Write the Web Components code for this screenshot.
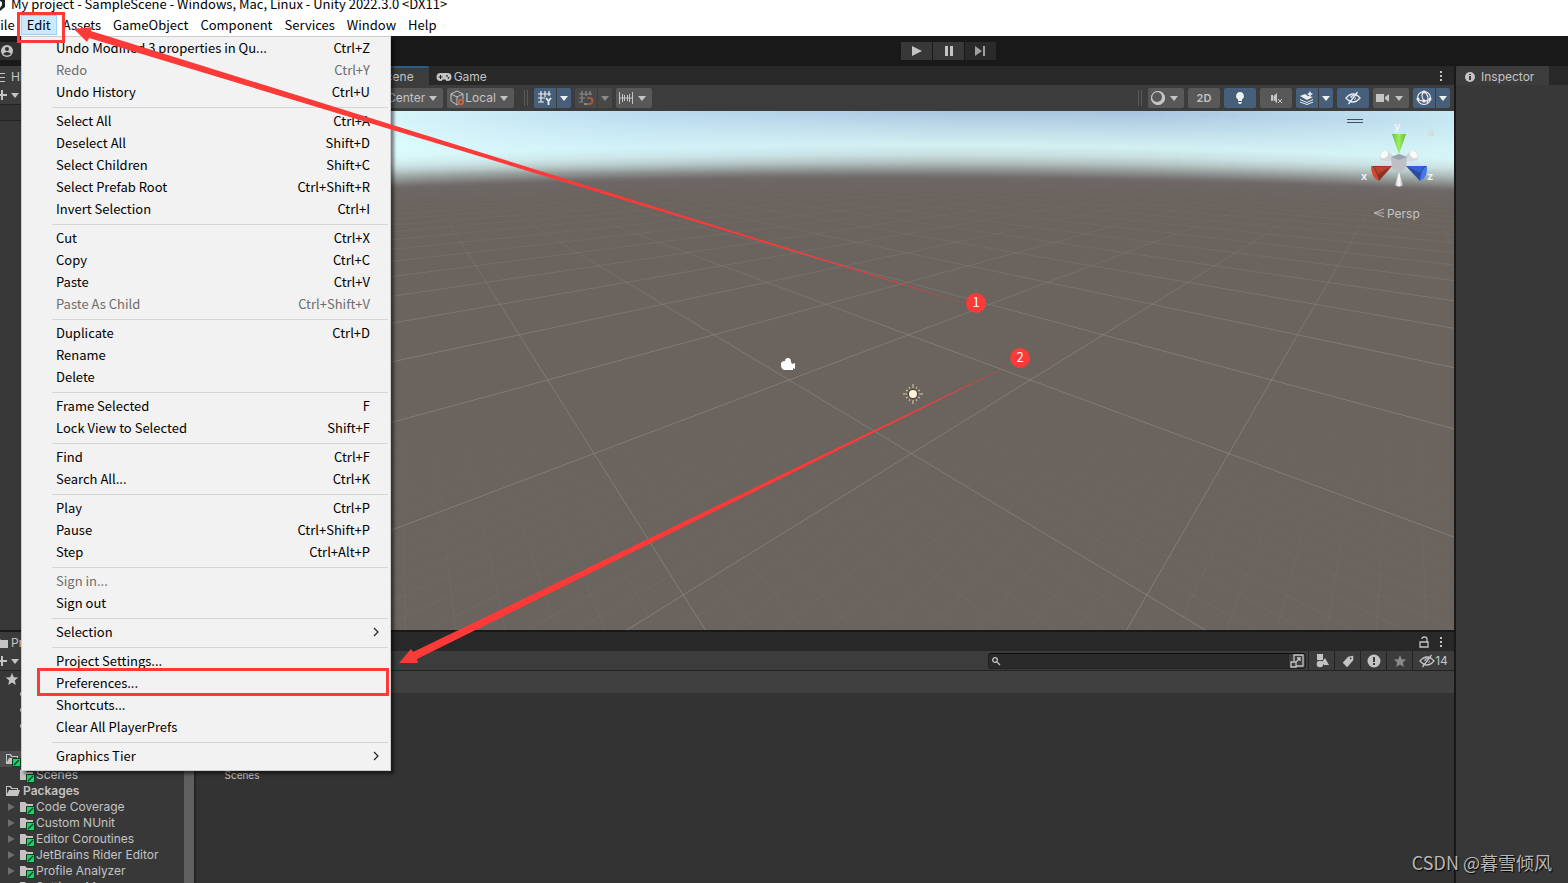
<!DOCTYPE html>
<html lang="en">
<head>
<meta charset="utf-8">
<title>My project - SampleScene</title>
<style>
    body {
        margin: 0;
        height: 100vh;
        overflow: hidden;
        background: #191919;
    }
</style>
</head>
<body>
<editor-window></editor-window>

<script>
const ICONS = {
    caret: '<path d="M4 6h8l-4 5z"/>',
    right: '<path d="M4 3l9 5-9 5z"/>',
    play: '<path d="M4 3l10 5-10 5z"/>',
    pause: '<path d="M5 3h3v10H5zM10 3h3v10h-3z"/>',
    step: '<path d="M3 3l7 5-7 5zM11 3h2v10h-2z"/>',
    user: '<circle cx="7" cy="8" r="6"/><g fill="#303030"><circle cx="7" cy="6" r="2"/><path d="M3 11q4-4 8 0-4 3-8 0z"/></g>',
    list: '<path d="M1 4h11v1H1zM1 8h11v1H1zM1 12h11v1H1z"/>',
    plus: '<path d="M7 3h2v4h4v2H9v4H7V9H3V7h4z"/>',
    kebab: '<path d="M7 3h2v2H7zM7 7h2v2H7zM7 11h2v2H7z"/>',
    lock: '<path d="M4 8h8v5H4zM6 8M6 5q0-2 2.500-2T11 5v3" fill="none" stroke="currentColor" stroke-width="1.300"/>',
    folder: '<path d="M1 3h5l2 2h7v8H1z"/>',
    open: '<path d="M1 13V3h5l1 2h6v2h2l-2 6zM2 11l2-4h8V6H6L5 4H2z" fill-rule="evenodd"/>',
    badge: '<path d="M0 3h5l2 2h6v8H0z"/><rect x="6" y="7" width="9" height="9" rx="1" fill="#0e3b22"/><rect x="7" y="8" width="7" height="7" fill="#17d36b"/><path d="M8 14l5-5" stroke="#0e3b22" stroke-width="1.300"/>',
    openbadge: '<path d="M1 13V3h5l1 2h6v2h2l-2 6zM2 11l2-4h8V6H6L5 4H2z" fill-rule="evenodd"/><rect x="7" y="7" width="9" height="9" rx="1" fill="#0e3b22"/><rect x="8" y="8" width="7" height="7" fill="#17d36b"/><path d="M9 14l5-5" stroke="#0e3b22" stroke-width="1.300"/>',
    star: '<path d="M8 2l1.800 4.200 4.400.4-3.400 3 1 4.400L8 11.600 4.200 14l1-4.400-3.400-3 4.400-.4z"/>',
    search: '<g fill="none" stroke="currentColor" stroke-width="1.300"><circle cx="6" cy="7" r="2.300"/><path d="M8 9l3 3"/></g>',
    game: '<path d="M4.500 4h7a4 4 0 0 1 0 8q-1.500 0-2.200-1.500H6.700Q6 12 4.500 12a4 4 0 0 1 0-8z"/><g fill="#282828"><path d="M4 6h1v1.500h1.500v1H5V10H4V8.500H2.500v-1H4z"/><circle cx="11" cy="6.800" r=".9"/><circle cx="12.500" cy="8.800" r=".9"/></g>',
    hash: '<path d="M5 2v12M11 2v12M2 5h12M2 11h12" fill="none" stroke="currentColor"/>',
    info: '<circle cx="7" cy="8" r="5"/><path d="M6 5h2v1H6zM6 7h2v4H6z" fill="#3c3c3c"/>',
    cube: '<g fill="none" stroke="currentColor"><path d="M8 1l6 3v7l-6 4-6-4V4zM2 4l6 3 6-3M8 7v8"/></g><circle cx="12" cy="12" r="3.500" fill="#585858"/><circle cx="12" cy="12" r="2.300" fill="none" stroke="#e8663c" stroke-width="1.400"/>',
    gridy: '<path d="M4 1v11M8 1v6M12 1v5M1 4h13M1 8h7M1 12h6" stroke="currentColor" fill="none" stroke-width="1.200"/><path d="M9 8l2.500 3v4M14 8l-2.500 3" stroke="currentColor" fill="none" stroke-width="1.800"/>',
    snap: '<path d="M4 1v11M8 1v5M12 1v4M1 4h13M1 8h6M1 12h4" stroke="currentColor" fill="none" stroke-width="1.200"/><path d="M9 8h2.500a3 3 0 0 1 0 6H9" stroke="#a8573f" fill="none" stroke-width="2"/><path d="M6 13h3v2H6z"/>',
    ruler: '<path d="M1.500 2v12M14.500 2v12M4.500 4v8M6.500 5v6M9.500 5v6M11.500 4v8M1 8h14" stroke="currentColor" fill="none"/>',
    shade: '<circle cx="8" cy="8" r="7"/><circle cx="7" cy="7" r="5" fill="#585858"/><circle cx="8" cy="8" r="6.500" fill="none" stroke="currentColor"/>',
    bulb: '<path d="M8 2a4 4 0 0 1 2 7.400V11H6V9.400A4 4 0 0 1 8 2zM6 12h4l-1 2H7z"/>',
    mute: '<path d="M3 5h2v6H3zM5.500 6L9 3v10l-3.500-3z"/><path d="M10 9l4 4M14 9l-4 4" stroke="currentColor"/>',
    fx: '<path d="M1 6l5-2 3 2 5 1-6 3zM1 9l7 3 6-3v1l-6 3-7-3zM11 1l1 2 2 1-2 1-1 2-1-2-2-1 2-1z"/><path d="M1 12l7 2.500 6-2.500" fill="none" stroke="currentColor"/>',
    eye: '<g fill="none" stroke="currentColor" stroke-width="1.300"><path d="M1 8q7-8 14 0-7 8-14 0z"/><path d="M12.500 2l-9 12"/><path d="M6 8a2 2 0 0 1 3-2"/></g><path d="M9 10a2 2 0 0 0 1.500-3z"/>',
    camera: '<path d="M1 4h8v8H1zM10 7l4-3v8l-4-3z"/>',
    sphere: '<g fill="none" stroke="currentColor" stroke-width="1.200"><circle cx="8" cy="8" r="6.500"/><path d="M8 1q-4 4 0 10M8 1q6 5 3 12M1 9q6 4 14 0"/></g><circle cx="8" cy="2" r="1.500"/><circle cx="2" cy="9" r="1.500"/><circle cx="8" cy="11" r="1.700"/><circle cx="14" cy="9" r="1.500"/>',
    jump: '<g fill="none" stroke="currentColor" stroke-width="1.300"><path d="M5 8V2h9v11H7M2 9h5v5H2zM7 9l4-4M8 5h3v3"/></g>',
    types: '<circle cx="6" cy="11" r="3.300"/><path d="M3 1h6v6H3zM11 5l4 7h-5L8 9z"/>',
    tag: '<path d="M8 3l6-1v5l-7 8-5-5zM11 4a1 1 0 1 0 .1 0z" fill-rule="evenodd"/>',
    alert: '<circle cx="8" cy="8" r="6.500"/><path d="M7 4h2v5H7zM7 10h2v2H7z" fill="#3c3c3c"/>'
};

function setup(el, css, html) {
    const shadow = el.attachShadow({mode: 'open'});
    shadow.innerHTML = `<style>:host{box-sizing:border-box} *{box-sizing:border-box}${css}</style>${html}`;
    return shadow;
}

class UiIcon extends HTMLElement {
    constructor() {
        super();
        setup(this, `
            :host{display:inline-block; width:16px; height:16px; flex:none;}
            :host([size="small"]){width:12px; height:12px;}
            :host([size="mid"]){width:14px; height:14px;}
            svg{display:block; width:100%; height:100%;}
        `, '');
    }
    connectedCallback() {
        const box = document.createElement('div');
        box.style.display = 'contents';
        box.innerHTML = `<svg viewBox="0 0 16 16" fill="currentColor" aria-hidden="true">${ICONS[this.getAttribute('name')]}</svg>`;
        this.shadowRoot.append(box);
    }
}
customElements.define('ui-icon', UiIcon);

class TitleBar extends HTMLElement {
    constructor() {
        super();
        setup(this, `
            :host{display:flex; height:15px; align-items:flex-end; overflow:hidden; background:#fff; color:#000;}
            svg{width:8px; height:20px; flex:none;}
            span{font:13px/22px "Noto Sans CJK SC", sans-serif; margin-left:3px; white-space:pre;}
        `, `
            <svg viewBox="0 0 8 20"><path d="M0 4l5-1v9l-5 4v-3l2-3V7L0 6z" fill="#222"/></svg>
            <span><slot></slot></span>
        `);
    }
}
customElements.define('title-bar', TitleBar);

class MenuBar extends HTMLElement {
    constructor() {
        super();
        const items = ['File', 'Edit', 'Assets', 'GameObject', 'Component', 'Services', 'Window', 'Help'];
        setup(this, `
            :host{display:block; background:#fff; height:21px; overflow:hidden;}
            nav{display:flex; margin-left:-13px;}
            button{font:13px/18px "Noto Sans CJK SC", sans-serif; color:#000; border:1px solid transparent; background:none; padding:0 5px; height:20px;}
            button.open{background:#cce8ff; border-color:#99d1ff;}
        `, `<nav>${items.map(t => `<button class="${t == 'Edit' ? 'open' : ''}">${t}</button>`).join('')}</nav>`);
    }
}
customElements.define('menu-bar', MenuBar);

class EditMenu extends HTMLElement {
    constructor() {
        super();
        // a leading "-" marks a disabled entry, ">" as shortcut opens a submenu
        const groups = [
            [['Undo Modified 3 properties in Qu...', 'Ctrl+Z'], ['-Redo', 'Ctrl+Y'], ['Undo History', 'Ctrl+U']],
            [['Select All', 'Ctrl+A'], ['Deselect All', 'Shift+D'], ['Select Children', 'Shift+C'], ['Select Prefab Root', 'Ctrl+Shift+R'], ['Invert Selection', 'Ctrl+I']],
            [['Cut', 'Ctrl+X'], ['Copy', 'Ctrl+C'], ['Paste', 'Ctrl+V'], ['-Paste As Child', 'Ctrl+Shift+V']],
            [['Duplicate', 'Ctrl+D'], ['Rename', ''], ['Delete', '']],
            [['Frame Selected', 'F'], ['Lock View to Selected', 'Shift+F']],
            [['Find', 'Ctrl+F'], ['Search All...', 'Ctrl+K']],
            [['Play', 'Ctrl+P'], ['Pause', 'Ctrl+Shift+P'], ['Step', 'Ctrl+Alt+P']],
            [['-Sign in...', ''], ['Sign out', '']],
            [['Selection', '>']],
            [['Project Settings...', ''], ['Preferences...', ''], ['Shortcuts...', ''], ['Clear All PlayerPrefs', '']],
            [['Graphics Tier', '>']]
        ];
        const row = ([name, key]) => {
            const off = name[0] == '-';
            const right = key == '>'
                ? '<svg viewBox="0 0 6 10"><path d="M1 1l4 4-4 4" fill="none" stroke="#222" stroke-width="1.200"/></svg>'
                : `<span>${key}</span>`;
            return `<button role="menuitem" ${off ? 'disabled' : ''}><span>${off ? name.slice(1) : name}</span>${right}</button>`;
        };
        setup(this, `
            :host{display:block; width:370px; padding:1px 2px 2px; background:#f2f2f2; border:1px solid #ccc; box-shadow:3px 3px 3px rgba(0,0,0,.5);}
            button{display:flex; justify-content:space-between; align-items:center; width:100%; height:22px; border:0; padding:0 18px 2px 32px; background:none; font:13px/20px "Noto Sans CJK SC", sans-serif; color:#000; text-align:left;}
            button:disabled{color:#6d6d6d;}
            hr{border:0; border-top:1px solid #d5d5d5; margin:3px 0 3px 28px;}
            svg{width:6px; height:10px; margin-right:-9px;}
        `, groups.map(g => g.map(row).join('')).join('<hr>'));
    }
}
customElements.define('edit-menu', EditMenu);

class PlayBar extends HTMLElement {
    constructor() {
        super();
        setup(this, `
            :host{display:grid; grid-template-columns:1fr auto 1fr; align-items:center; height:30px; background:#191919; padding-right:1px;}
            div{display:flex; gap:1px; margin-left:329px;}
            button{display:flex; align-items:center; justify-content:center; width:31px; height:18px; border:0; padding:0; background:#383838; color:#c4c4c4;}
            .acc{width:40px; padding-left:0; justify-content:flex-start; background:#303030;}
            .dim{color:#a0a0a0; background:#2a2a2a;}
        `, `
            <button class="acc" aria-label="Account"><ui-icon name="user"></ui-icon></button>
            <div>
                <button aria-label="Play"><ui-icon name="play"></ui-icon></button>
                <button aria-label="Pause"><ui-icon name="pause"></ui-icon></button>
                <button class="dim" aria-label="Step"><ui-icon name="step"></ui-icon></button>
            </div>
        `);
    }
}
customElements.define('play-bar', PlayBar);

class DockPanel extends HTMLElement {
    constructor() {
        super();
        setup(this, `
            :host{display:flex; flex-direction:column; min-width:0; min-height:0; background:#383838; overflow:hidden;}
            .tabs{display:flex; height:19px; flex:none; background:#282828;}
            .end{margin-left:auto; display:flex; align-items:center; gap:1px; padding-right:5px;}
            .body{flex:1; min-height:0; display:flex; flex-direction:column;}
        `, `
            <div class="tabs"><slot name="tab"></slot><div class="end"><slot name="end"></slot></div></div>
            <slot name="tools"></slot>
            <div class="body"><slot></slot></div>
        `);
    }
}
customElements.define('dock-panel', DockPanel);

class DockTab extends HTMLElement {
    constructor() {
        super();
        const icon = this.getAttribute('icon');
        setup(this, `
            :host{display:flex;}
            button{display:flex; align-items:center; gap:2px; border:0; border-top:2px solid transparent; padding:0 15px 0 7px; background:none; color:#c4c4c4; font:12px/16px Inter, sans-serif;}
            :host([active]) button{background:#3c3c3c; border-radius:2px 2px 0 0;}
            :host([focused]) button{border-top-color:#2c5d87; padding-left:4px;}
            :host([edge]) button{padding-left:0; margin-left:-7px;}
        `, `<button><ui-icon name="${icon}"></ui-icon><slot></slot></button>`);
    }
}
customElements.define('dock-tab', DockTab);

class ToolButton extends HTMLElement {
    constructor() {
        super();
        setup(this, `
            :host{display:flex; gap:1px; flex:none;}
            button{display:flex; align-items:center; justify-content:center; height:20px; min-width:32px; border:0; border-radius:2px; padding:0 2px; background:#585858; color:#c4c4c4; font:12px/16px Inter, sans-serif;}
            :host([wide]) button{width:36px;}
            :host([on]) button{background:#46607c; color:#eee;}
            :host([off]) button{background:#484848; color:#8a8a8a;}
            .main{min-width:22px; width:22px; border-radius:2px 0 0 2px;}
            .more{min-width:14px; width:14px; border-radius:0 2px 2px 0; padding:0;}
        `, this.hasAttribute('split')
            ? `<button class="main" aria-label="Toggle"><slot></slot></button><button class="more" aria-label="Options"><ui-icon name="caret"></ui-icon></button>`
            : '<button><slot></slot></button>');
    }
}
customElements.define('tool-button', ToolButton);

class SceneToolbar extends HTMLElement {
    constructor() {
        super();
        setup(this, `
            :host{display:flex; flex:none; align-items:center; gap:4px; height:26px; padding:0 4px 0 13px; background:#3c3c3c;}
            i{width:4px; height:16px; border:solid #5a5a5a; border-width:0 1px; margin:0 2px 0 6px; flex:none;}
            .gap{flex:1;}
            b{font-weight:600; font-size:11px;}
        `, `
            <tool-button><ui-icon name="cube"></ui-icon>Center<ui-icon name="caret"></ui-icon></tool-button>
            <tool-button><ui-icon name="cube"></ui-icon>Local<ui-icon name="caret"></ui-icon></tool-button>
            <i></i>
            <tool-button split on><ui-icon name="gridy"></ui-icon></tool-button>
            <tool-button split off><ui-icon name="snap"></ui-icon></tool-button>
            <tool-button wide><ui-icon name="ruler"></ui-icon><ui-icon name="caret"></ui-icon></tool-button>
            <span class="gap"></span>
            <i></i>
            <tool-button wide><ui-icon name="shade"></ui-icon><ui-icon name="caret"></ui-icon></tool-button>
            <tool-button><b>2D</b></tool-button>
            <tool-button on><ui-icon name="bulb"></ui-icon></tool-button>
            <tool-button><ui-icon name="mute"></ui-icon></tool-button>
            <tool-button split on><ui-icon name="fx"></ui-icon></tool-button>
            <tool-button on><ui-icon name="eye"></ui-icon></tool-button>
            <tool-button wide><ui-icon name="camera"></ui-icon><ui-icon name="caret"></ui-icon></tool-button>
            <tool-button split on><ui-icon name="sphere"></ui-icon></tool-button>
        `);
    }
}
customElements.define('scene-toolbar', SceneToolbar);

// Ground grid seen along its diagonal: row n is the n-th line of crossings,
// k the sideways position in it.
function gridPath(n0, n1, step, reach) {
    const point = (n, k) => {
        const s = 1 / (0.002157 + 0.000994 * n);
        return (903.7 + (0.0245 + k) * s).toFixed(1) + ' ' + (146.7 + 0.967 * s).toFixed(1);
    };
    let d = '';
    for (let m = -reach; m <= reach; m += step) {
        d += `M${point(n0, (n0 - 1) / 2 + m)}L${point(n1, (n1 - 1) / 2 + m)}`;
        d += `M${point(n0, (1 - n0) / 2 + m)}L${point(n1, (1 - n1) / 2 + m)}`;
    }
    return d;
}

class SceneView extends HTMLElement {
    constructor() {
        super();
        let rays = '';
        for (let a = 0; a < 12; a++) {
            rays += `<path d="M0-6V-${a % 3 ? 8 : 10}" transform="rotate(${a * 30})"/>`;
        }
        setup(this, `
            :host{display:block; flex:1; min-height:0; background:#69625c;}
            svg{display:block; width:100%; height:100%;}
            text{font-family:Inter, sans-serif;}
        `, `
            <svg viewBox="356 111 1098 519" preserveAspectRatio="xMidYMin slice">
                <defs>
                    <radialGradient id="sky" gradientUnits="userSpaceOnUse" cx="890" cy="12177" r="12066">
                        <stop offset=".99300" stop-color="#6a635e"/>
                        <stop offset=".99440" stop-color="#6d6765"/>
                        <stop offset=".99465" stop-color="#757170"/>
                        <stop offset=".99520" stop-color="#929997"/>
                        <stop offset=".99580" stop-color="#b4c3c2"/>
                        <stop offset=".99640" stop-color="#c9dfe0"/>
                        <stop offset=".99718" stop-color="#d3f0f2"/>
                        <stop offset=".99834" stop-color="#c3dfea"/>
                        <stop offset="1" stop-color="#a9c6e1"/>
                    </radialGradient>
                    <linearGradient id="side">
                        <stop offset=".03" stop-color="#e0ffff" stop-opacity=".85"/>
                        <stop offset=".25" stop-color="#d0f4ff" stop-opacity=".5"/>
                        <stop offset=".55" stop-color="#d0f0ff" stop-opacity="0"/>
                        <stop offset=".7" stop-color="#d0f0ff" stop-opacity="0"/>
                        <stop offset="1" stop-color="#dcffff" stop-opacity=".6"/>
                    </linearGradient>
                    <linearGradient id="low" x2="0" y2="1">
                        <stop offset="0" stop-color="#fff"/>
                        <stop offset=".6" stop-color="#fff"/>
                        <stop offset="1" stop-color="#000"/>
                    </linearGradient>
                    <linearGradient id="fade" gradientUnits="userSpaceOnUse" x1="0" y1="175" x2="0" y2="350">
                        <stop offset="0" stop-color="#000"/>
                        <stop offset=".3" stop-color="#444"/>
                        <stop offset="1" stop-color="#fff"/>
                    </linearGradient>
                    <linearGradient id="near" gradientUnits="userSpaceOnUse" x1="0" y1="380" x2="0" y2="600">
                        <stop offset="0" stop-color="#000"/>
                        <stop offset="1" stop-color="#fff"/>
                    </linearGradient>
                    <mask id="mlow" maskUnits="userSpaceOnUse" x="356" y="111" width="1098" height="62"><rect x="356" y="111" width="1098" height="62" fill="url(#low)"/></mask>
                    <mask id="mfade" maskUnits="userSpaceOnUse" x="356" y="111" width="1098" height="900"><rect x="356" y="111" width="1098" height="900" fill="url(#fade)"/></mask>
                    <mask id="mnear" maskUnits="userSpaceOnUse" x="356" y="111" width="1098" height="900"><rect x="356" y="111" width="1098" height="900" fill="url(#near)"/></mask>
                    <linearGradient id="green"><stop offset="0" stop-color="#6cc03c"/><stop offset=".5" stop-color="#9cf060"/><stop offset="1" stop-color="#6cb040"/></linearGradient>
                    <linearGradient id="white"><stop offset="0" stop-color="#bbb"/><stop offset=".5" stop-color="#fff"/><stop offset="1" stop-color="#aaa"/></linearGradient>
                </defs>
                <rect x="356" y="111" width="1098" height="900" fill="url(#sky)"/>
                <rect x="356" y="111" width="1098" height="62" fill="url(#side)" mask="url(#mlow)"/>
                <g mask="url(#mfade)"><path d="${gridPath(-1.5, 26, 1, 40)}" stroke="#9a9c9a" stroke-opacity=".44" fill="none"/></g>
                <g mask="url(#mnear)"><path d="${gridPath(-1, 2.5, 0.1, 5)}" stroke="#8a8c8a" stroke-opacity=".16" fill="none"/></g>

                <path d="M781 364q0-3 4-3 0-3 3-3t3 4l1 2 3-1v6l-2-1v2h-9q-3-1-3-5z" fill="#fff"/>
                <g transform="translate(913 394)"><g stroke="#d8cfae" stroke-width="1">${rays}</g><circle r="5" fill="#4b463f"/><circle r="4" fill="#fff4d8"/></g>

                <path d="M1347 119.500h16M1347 122.500h16" stroke="#4a5050"/>
                <path d="M1392 134h14l-7 20z" fill="url(#green)"/>
                <path d="M1381 155q0-4 4-4 3 0 8 5l-1 5h-7l-5-1q0-3 1-5z" fill="#d4d8da"/><path d="M1381 155q1-4 4-4t3 3-4 4-3-3z" fill="#fafafa"/>
                <path d="M1417 155q0-4-4-4-3 0-8 5l1 5h7l5-1q0-3-1-5z" fill="#d4d8da"/><path d="M1417 155q-1-4-4-4t-3 3 4 4 3-3z" fill="#fafafa"/>
                <path d="M1391 157l8-3 8 3-1 11-7 5-7-5z" fill="#bcc0c4"/>
                <path d="M1391 157l8-3 8 3-8 3z" fill="#9ba4ae"/>
                <path d="M1399 172l4 13q-4 3-8 0z" fill="url(#white)"/>
                <path d="M1392 166h-20l7 15z" fill="#8c3222"/><path d="M1371 166q4 1 8 15-8-3-8-15z" fill="#d04a30"/><path d="M1374 167l18-1-14 8z" fill="#b84430"/>
                <path d="M1406 166h21l-7 15z" fill="#2c4aa0"/><path d="M1427 166q-6 2-7 15 8-3 7-15z" fill="#4678ec"/><path d="M1406 166h18l-4 7z" fill="#3860d0"/>
                <g fill="#f0f4f4" font-size="11" font-weight="600"><text x="1394" y="130">y</text><text x="1361" y="180">x</text><text x="1427" y="180">z</text></g>
                <path d="M1428 132h6v4h-6zM1429 132v-2h4v2" fill="#d8dcdc" stroke="none"/>
                <path d="M1384 209l-10 4 10 4M1374 213h10" stroke="#b8b8b8" fill="none"/>
                <text x="1387" y="218" font-size="12" fill="#c4c4c4">Persp</text>
            </svg>
        `);
    }
}
customElements.define('scene-view', SceneView);

class CreateBar extends HTMLElement {
    constructor() {
        super();
        setup(this, `
            :host{display:flex; align-items:center; flex:none; height:20px; background:#3c3c3c; border-bottom:1px solid #232323;}
            button{display:flex; align-items:center; border:0; padding:0; margin-left:-6px; background:none; color:#c4c4c4;}
            ui-icon + ui-icon{margin-left:-3px;}
            slot{display:contents;}
        `, '<button aria-label="Create"><ui-icon name="plus"></ui-icon><ui-icon name="caret"></ui-icon></button><slot></slot>');
    }
}
customElements.define('create-bar', CreateBar);

class ProjectSearch extends HTMLElement {
    constructor() {
        super();
        setup(this, `
            :host{display:flex; margin-left:auto; height:100%; align-items:center; color:#c4c4c4;}
            label{display:flex; align-items:center; width:318px; height:16px; background:#2a2a2a; border:1px solid #212121; border-top-color:#0d0d0d; border-radius:3px; margin-right:2px; overflow:hidden;}
            input{flex:1; min-width:0; border:0; padding:0; background:none; color:#d2d2d2; font:12px/14px Inter, sans-serif; outline:none;}
            button{display:flex; align-items:center; justify-content:center; width:26px; height:100%; border:0; border-left:1px solid #232323; padding:0; background:none; color:inherit; font:12px/16px Inter, sans-serif;}
            label button{width:17px; background:#3c3c3c;}
            .count{width:42px;}
            .dim{color:#8a8a8a;}
        `, `
            <label><ui-icon name="search"></ui-icon><input type="text" aria-label="Search"><button aria-label="Open search window"><ui-icon name="jump"></ui-icon></button></label>
            <button aria-label="Search by type"><ui-icon name="types"></ui-icon></button>
            <button aria-label="Search by label"><ui-icon name="tag" size="mid"></ui-icon></button>
            <button aria-label="Search by log"><ui-icon name="alert"></ui-icon></button>
            <button class="dim" aria-label="Save search"><ui-icon name="star"></ui-icon></button>
            <button class="count"><ui-icon name="eye"></ui-icon>14</button>
        `);
    }
}
customElements.define('project-search', ProjectSearch);

class ProjectTree extends HTMLElement {
    constructor() {
        super();
        const packages = ['Code Coverage', 'Custom NUnit', 'Editor Coroutines', 'JetBrains Rider Editor', 'Profile Analyzer', 'Settings Manager'];
        setup(this, `
            :host{display:flex; width:196px; flex:none; border-right:2px solid #232323; color:#c4c4c4; font:12px/16px Inter, sans-serif;}
            ul{flex:1; list-style:none; margin:0; padding:0; overflow:hidden;}
            li{display:flex; align-items:center; height:16px; padding-left:5px; gap:2px; white-space:nowrap;}
            .fav{padding-left:4px;}
            .sub{padding-left:20px; gap:0;}
            .find{padding-left:17px;}
            .pkg{gap:0;}
            .pkg ui-icon[size]{color:#6e6e6e; margin-right:3px;}
            .sel{background:#4d4d4d; margin-top:16px;}
            .bar{width:10px; background:#5f5f5f;}
            b{font-weight:600;}
        `, `
            <ul>
                <li class="fav"><ui-icon name="star"></ui-icon></li>
                <li class="find"><ui-icon name="search"></ui-icon></li>
                <li class="find"><ui-icon name="search"></ui-icon></li>
                <li class="find"><ui-icon name="search"></ui-icon></li>
                <li class="sel"><ui-icon name="openbadge"></ui-icon></li>
                <li class="sub"><ui-icon name="badge"></ui-icon>Scenes</li>
                <li><ui-icon name="open"></ui-icon><b>Packages</b></li>
                ${packages.map(p => `<li class="pkg"><ui-icon name="right" size="small"></ui-icon><ui-icon name="badge"></ui-icon>${p}</li>`).join('')}
            </ul>
            <div class="bar"></div>
        `);
    }
}
customElements.define('project-tree', ProjectTree);

class ProjectFiles extends HTMLElement {
    constructor() {
        super();
        setup(this, `
            :host{display:flex; flex-direction:column; flex:1; background:#333; color:#c4c4c4; font:10px/14px Inter, sans-serif;}
            header{height:22px; background:#404040;}
            figure{margin:15px 0 0 6px; width:80px; text-align:center;}
            svg{display:block; width:60px; height:60px; margin:0 auto;}
        `, `
            <header></header>
            <figure><svg viewBox="0 0 16 16"><path d="M1 3h5l2 2h7v8H1z" fill="#c4c4c4"/></svg><figcaption>Scenes</figcaption></figure>
        `);
    }
}
customElements.define('project-files', ProjectFiles);

class CalloutLayer extends HTMLElement {
    constructor() {
        super();
        setup(this, `
            :host{position:absolute; inset:0; pointer-events:none;}
            svg{position:absolute; left:0; top:0; width:100%; height:100%; overflow:visible;}
            .box{position:absolute; border:3px solid #fc3a38;}
            .num{position:absolute; width:20px; height:20px; border-radius:50%; background:#fc3a38; color:#fff; font:13px/18px "Noto Sans CJK SC", sans-serif; text-align:center;}
            .mark{position:absolute; right:16px; bottom:8px; font:18px/26px "Noto Sans CJK SC", sans-serif; color:#b8b8b8; text-shadow:1px 1px 1px #000;}
        `, `
            <svg fill="#fc3a38"><path d="M74 29L93 27L91 31L980 308L89 38L87 42z"/><path d="M399 663L411 649L413 652L1022 359L417 659L418 663z"/></svg>
            <div class="box" style="left:17px; top:12px; width:48px; height:31px"></div>
            <div class="box" style="left:37px; top:668px; width:352px; height:28px"></div>
            <span class="num" style="left:966px; top:293px">1</span>
            <span class="num" style="left:1010px; top:348px">2</span>
            <span class="mark">CSDN @暮雪倾风</span>
        `);
    }
}
customElements.define('callout-layer', CalloutLayer);

class EditorWindow extends HTMLElement {
    constructor() {
        super();
        setup(this, `
            :host{display:flex; flex-direction:column; position:relative; height:100%; overflow:hidden;}
            .dock{flex:1; min-height:0; display:grid; grid-template-columns:minmax(0,1fr) 112px; gap:2px; background:#191919;}
            .left{display:grid; grid-template-rows:minmax(0,1fr) 251px; gap:2px; min-height:0; min-width:0;}
            .top{display:grid; grid-template-columns:354px minmax(0,1fr); gap:2px; min-height:0;}
            .files{display:flex; flex:1; min-height:0;}
            .row{height:16px; background:#333; border-bottom:1px solid #232323;}
            edit-menu{position:absolute; left:21px; top:36px;}
            ui-icon{color:#c4c4c4;}
        `, `
            <title-bar>My project - SampleScene - Windows, Mac, Linux - Unity 2022.3.0 &lt;DX11&gt;</title-bar>
            <menu-bar></menu-bar>
            <play-bar></play-bar>
            <div class="dock">
                <div class="left">
                    <div class="top">
                        <dock-panel>
                            <dock-tab slot="tab" icon="list" active edge>Hierarchy</dock-tab>
                            <create-bar slot="tools"></create-bar>
                            <div class="row"></div>
                        </dock-panel>
                        <dock-panel>
                            <dock-tab slot="tab" icon="hash" active focused>Scene</dock-tab>
                            <dock-tab slot="tab" icon="game">Game</dock-tab>
                            <ui-icon slot="end" name="kebab"></ui-icon>
                            <scene-toolbar slot="tools"></scene-toolbar>
                            <scene-view></scene-view>
                        </dock-panel>
                    </div>
                    <dock-panel>
                        <dock-tab slot="tab" icon="folder" active edge>Project</dock-tab>
                        <ui-icon slot="end" name="lock"></ui-icon>
                        <ui-icon slot="end" name="kebab"></ui-icon>
                        <create-bar slot="tools"><project-search></project-search></create-bar>
                        <div class="files"><project-tree></project-tree><project-files></project-files></div>
                    </dock-panel>
                </div>
                <dock-panel><dock-tab slot="tab" icon="info" active>Inspector</dock-tab></dock-panel>
            </div>
            <edit-menu></edit-menu>
            <callout-layer></callout-layer>
        `);
    }
}
customElements.define('editor-window', EditorWindow);
</script>
</body>
</html>
